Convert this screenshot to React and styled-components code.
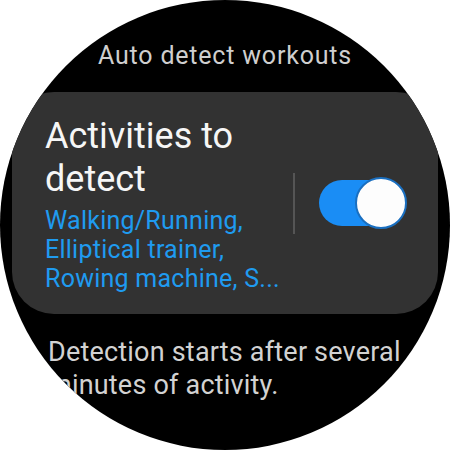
import React, { useState } from "react";
import styled, { createGlobalStyle } from "styled-components";

const GlobalStyle = createGlobalStyle`
  html, body {
    margin: 0;
    padding: 0;
    background: #ffffff;
  }
  body {
    font-family: Roboto, "Noto Sans", sans-serif;
  }
`;

const Watch = styled.div`
  width: 450px;
  height: 450px;
  border-radius: 50%;
  overflow: hidden;
  background: #000;
  display: flex;
  flex-direction: column;
`;

const Title = styled.div`
  padding-top: 41px;
  text-align: center;
  font-size: 25px;
  line-height: 30px;
  letter-spacing: 0.8px;
  color: #cfcfcf;
`;

const Card = styled.div`
  margin: 21px 12px 0;
  height: 222px;
  box-sizing: border-box;
  border-radius: 42px;
  background: #323232;
  padding: 0 0 0 33px;
  display: flex;
  align-items: center;
`;

const Texts = styled.div`
  width: 245px;
  padding-top: 1px;
`;

const Heading = styled.div`
  font-size: 36px;
  line-height: 43px;
  color: #f6f6f6;
`;

const Summary = styled.div`
  margin-top: 5px;
  font-size: 25px;
  line-height: 29px;
  letter-spacing: 0.25px;
  color: #1f9bf0;
`;

const Divider = styled.div`
  width: 2px;
  height: 61px;
  background: #555;
  margin: 0 24px 0 3px;
`;

const Track = styled.button`
  width: 87px;
  height: 46px;
  border: none;
  padding: 0;
  border-radius: 23px;
  background: ${(p) => (p.$on ? "#1a8df5" : "#555")};
  position: relative;
  cursor: pointer;
`;

const Knob = styled.span`
  position: absolute;
  top: -3px;
  left: ${(p) => (p.$on ? "36px" : "-2px")};
  width: 52px;
  height: 52px;
  box-sizing: border-box;
  border-radius: 50%;
  background: #fdfdfd;
  border: 2px solid #1a6fc0;
`;

const Note = styled.div`
  margin-top: 22px;
  padding-left: 48px;
  font-size: 27px;
  line-height: 33px;
  letter-spacing: 0.2px;
  color: #d2d2d2;
`;

export default function App() {
  const [on, setOn] = useState(true);

  return (
    <>
      <GlobalStyle />
      <Watch>
        <Title>Auto detect workouts</Title>
        <Card>
          <Texts>
            <Heading>Activities to detect</Heading>
            <Summary>Walking/Running, Elliptical trainer, Rowing machine, S...</Summary>
          </Texts>
          <Divider />
          <Track $on={on} onClick={() => setOn(!on)}>
            <Knob $on={on} />
          </Track>
        </Card>
        <Note>Detection starts after several minutes of activity.</Note>
      </Watch>
    </>
  );
}
